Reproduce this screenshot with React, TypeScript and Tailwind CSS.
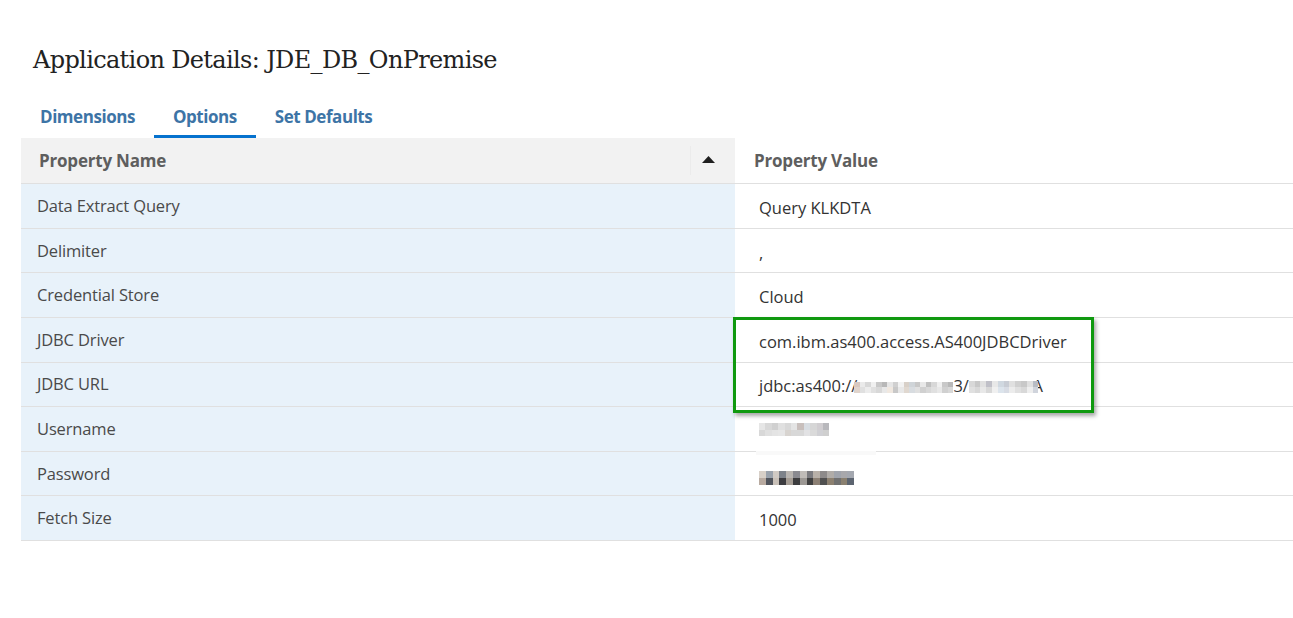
import React from "react";

function Mosaic({ colors, cell, cols }: { colors: string[]; cell: number; cols: number }) {
  return (
    <span
      className="inline-grid align-middle"
      style={{ gridTemplateColumns: `repeat(${cols}, ${cell}px)`, gridAutoRows: `${cell}px` }}
    >
      {colors.map((c, i) => (
        <span key={i} style={{ background: c }} />
      ))}
    </span>
  );
}

const userColors = [
  "#e6e6e6", "#d8d8d8", "#d0d0d0", "#e0e0e0", "#d8d8d8", "#e4e4e4", "#c8bfbc", "#d8dde2", "#d6d6d6", "#d0cdd0", "#b8b8bc",
  "#d8d8d8", "#e0e0e0", "#e4e4e4", "#e6e6e6", "#d8d4d0", "#d8d8d8", "#d8d8d8", "#e2e2e4", "#dadada", "#d0d0d4", "#cfcfcf",
];
const pwColors = [
  "#d8d0c8", "#9aa2ac", "#d0cac4", "#7d828a", "#b8b4b0", "#8a8a90", "#c0bcb8", "#7c7c80", "#b8b0a8", "#8d8a8a", "#b0aca8", "#a0a4ac", "#a8a8ac", "#a4a8b0",
  "#b8aaa0", "#50545c", "#c8c0b8", "#3c3c40", "#a49c94", "#3c3c3e", "#9c9894", "#404040", "#8c8074", "#505050", "#8c8070", "#707070", "#8a8070", "#5c6470",
];
const ipColors = [
  "#d8c8c0", "#eaeaea", "#d8d8d8", "#f0f0f0", "#c8c8c8", "#b8b8b8", "#e6e6e6", "#d0d0d0", "#f2f2f2", "#d8d0c8", "#cfd4d8", "#c8c8c8", "#e8e8e8", "#c0c0c0", "#d8d8d8", "#f0f0f0", "#c8c8c8", "#b8b8b8",
  "#e0d4cc", "#e0e0e0", "#ececec", "#e0e0e0", "#d8d8d8", "#e8e8e8", "#f0e8e0", "#c8c8c8", "#e8e8e8", "#e0d8d0", "#d8dce0", "#e0e0e0", "#d0d0d0", "#d8d8d8", "#e0e0e0", "#e8e8e8", "#d0d0d0", "#d8d8d8",
];
const prodColors = [
  "#d8d8d8", "#c8c8c8", "#e0e0e0", "#c0c0c8", "#e8e8e8", "#d0d8e0", "#c8ccd4", "#e0e0e0", "#d0d0d0", "#c8c8c8", "#e0e0e0", "#b8bcc4",
  "#e0e0e0", "#d8d8d8", "#e8e8e8", "#d8d8d8", "#f0f0f0", "#dce4ec", "#d8dce4", "#ececec", "#e0e0e0", "#d8d8d8", "#eeeeee", "#d0d4dc",
];

const data: { name: string; value: React.ReactNode }[] = [
  { name: "Data Extract Query", value: "Query KLKDTA" },
  { name: "Delimiter", value: "," },
  { name: "Credential Store", value: "Cloud" },
  { name: "JDBC Driver", value: "com.ibm.as400.access.AS400JDBCDriver" },
  {
    name: "JDBC URL",
    value: (
      <span className="inline-flex items-center">
        <span>jdbc:as400://</span>
        <span className="relative -top-[1px] -ml-[3px]">
          <Mosaic colors={ipColors} cell={5.5} cols={18} />
        </span>
        <span>3/</span>
        <span className="relative -top-[1px]">
          <Mosaic colors={prodColors} cell={5.8} cols={12} />
        </span>
        <span className="-ml-[6px]">A</span>
      </span>
    ),
  },
  {
    name: "Username",
    value: (
      <span className="relative -top-[3px]">
        <Mosaic colors={userColors} cell={6.4} cols={11} />
      </span>
    ),
  },
  {
    name: "Password",
    value: (
      <span className="relative top-[1px]">
        <Mosaic colors={pwColors} cell={6.8} cols={14} />
      </span>
    ),
  },
  { name: "Fetch Size", value: "1000" },
];

export default function App() {
  return (
    <div className="w-[1293px] h-[618px] bg-white overflow-hidden relative" style={{ fontFamily: '"Open Sans", "Noto Sans", sans-serif' }}>
      <div className="pt-[44px] pl-[33px]">
        <h1
          className="text-[24px] leading-[32px] text-[#222]"
          style={{ fontFamily: '"DejaVu Serif", "Liberation Serif", serif', letterSpacing: "-0.65px" }}
        >
          Application Details: JDE_DB_OnPremise
        </h1>
      </div>

      <div className="flex ml-[21px] mt-[22px] h-[40px] items-stretch">
        {["Dimensions", "Options", "Set Defaults"].map((t, i) => (
          <div
            key={t}
            className={`px-[19px] flex items-center text-[17px] font-bold text-[#3d74a6] border-b-[3px] ${
              i === 1 ? "border-[#0572ce]" : "border-transparent"
            }`}
          >
            <span className="tracking-[-0.45px]">{t}</span>
          </div>
        ))}
      </div>

      <div className="ml-[21px] relative">
        <div className="flex h-[46px] border-b border-[#e0e0e0]">
          <div className="w-[714px] bg-[#f2f2f2] flex items-center justify-between pl-[18px] pr-[20px] relative">
            <span className="text-[17px] font-bold text-[#5e5e5e] tracking-[-0.2px] mt-[1px]">Property Name</span>
            <div className="absolute right-[44px] top-[8px] bottom-[8px] w-px bg-[#ebebeb]" />
            <svg width="13" height="7" viewBox="0 0 13 7" className="mt-[-2px]">
              <polygon points="6.5,0 13,7 0,7" fill="#1f1f1f" />
            </svg>
          </div>
          <div className="flex-1 flex items-center pl-[19px]">
            <span className="text-[17px] font-bold text-[#5e5e5e] tracking-[-0.2px] mt-[1px]">Property Value</span>
          </div>
        </div>

        {data.map((r) => (
          <div key={r.name} className="flex h-[44.625px] border-b border-[#e0e0e0] text-[16.5px]">
            <div className="w-[714px] bg-[#e8f2fa] flex items-center pl-[16px] text-[#4a4a4a] tracking-[-0.15px]">
              <span className="mt-[1px]">{r.name}</span>
            </div>
            <div className="flex-1 flex items-center pl-[24px] text-[#333]">
              <span className="mt-[5px] flex items-center">{r.value}</span>
            </div>
          </div>
        ))}

        <div className="absolute left-[712px] top-[179px] w-[361px] h-[96px] border-[3px] border-[#0f990f] shadow-[2px_3px_4px_rgba(0,0,0,0.35)] pointer-events-none" />
        <div className="absolute left-[735px] top-[313px] w-[120px] h-[4px] bg-[#f9f9f9]" />
      </div>
    </div>
  );
}
